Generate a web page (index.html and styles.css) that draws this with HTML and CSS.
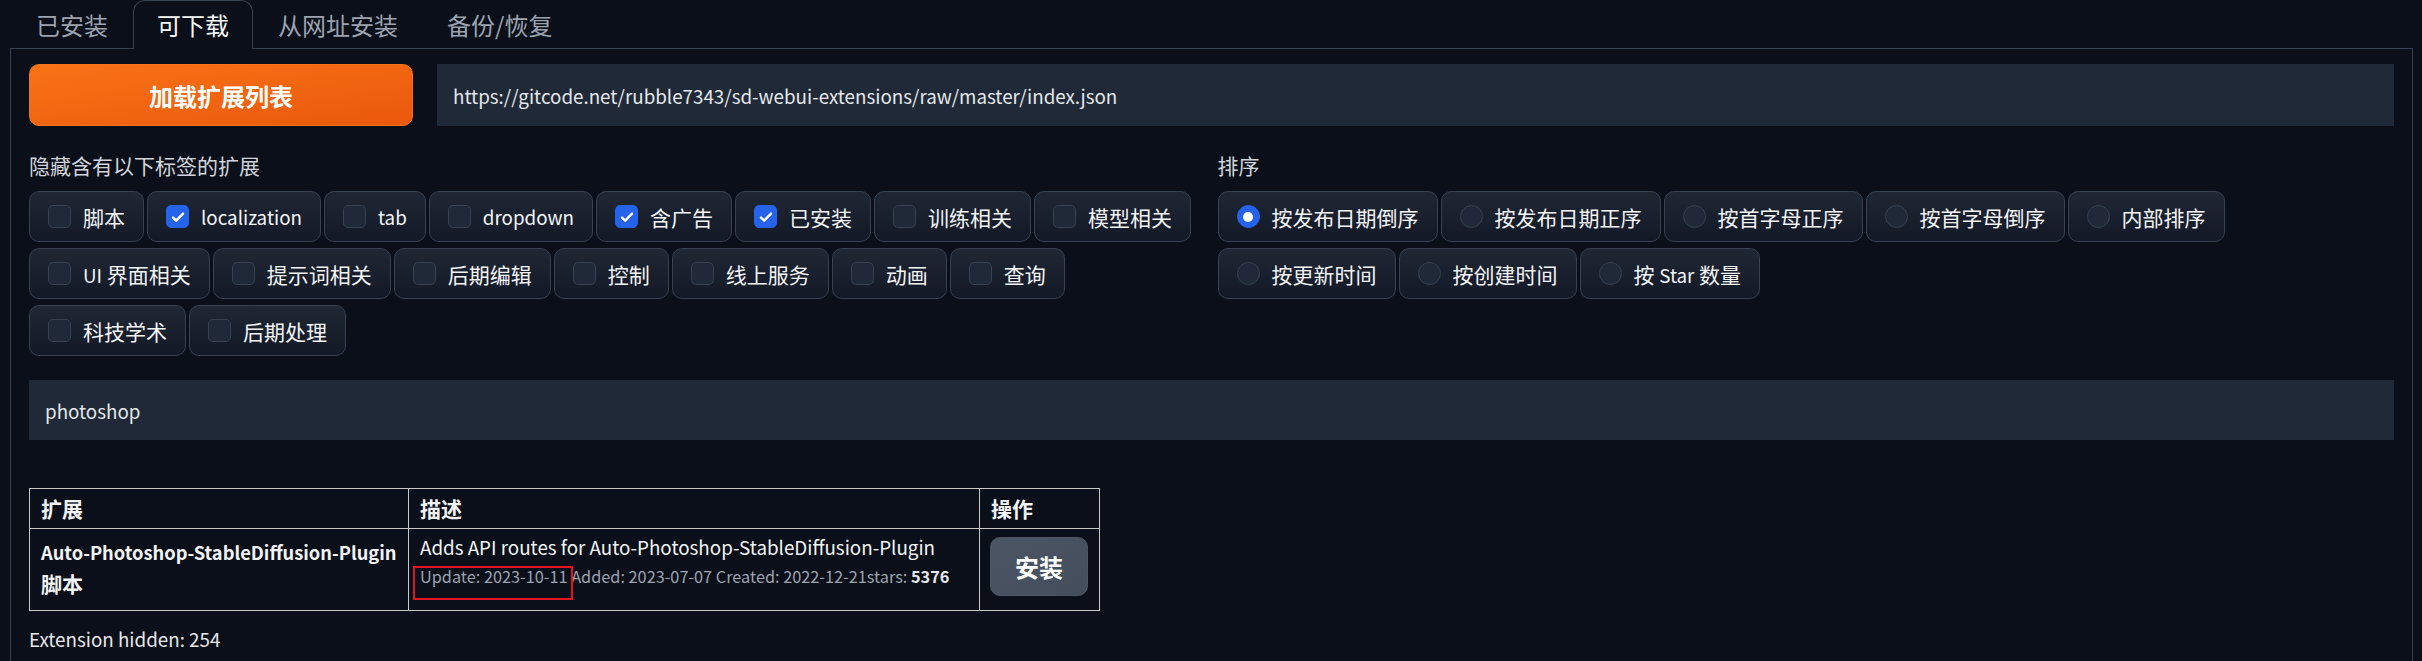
FILE: index.html
```html
<!DOCTYPE html>
<html lang="zh-CN">
<head>
  <meta charset="UTF-8">
  <title>扩展 - 可下载</title>
  <link rel="stylesheet" href="styles.css">
</head>
<body>

  <div class="tabs">
    <div class="tab-nav">
      <button class="tab">已安装</button>
      <button class="tab selected">可下载</button>
      <button class="tab">从网址安装</button>
      <button class="tab">备份/恢复</button>
    </div>

    <div class="tab-panel">
      <div class="load-row">
        <button class="btn-primary">加载扩展列表</button>
        <div class="textbox en">https://gitcode.net/rubble7343/sd-webui-extensions/raw/master/index.json</div>
      </div>

      <div class="filter-row">
        <div class="filter-col">
          <div class="group-label">隐藏含有以下标签的扩展</div>
          <div class="options">
            <label class="option"><span class="checkbox"></span>脚本</label>
            <label class="option"><span class="checkbox checked"><svg viewBox="0 0 16 16" width="16" height="16"><path d="M3 8.6l3.2 3.1L13 4.6" fill="none" stroke="#fff" stroke-width="2.4" stroke-linecap="round" stroke-linejoin="round"/></svg></span><span class="en">localization</span></label>
            <label class="option"><span class="checkbox"></span><span class="en">tab</span></label>
            <label class="option"><span class="checkbox"></span><span class="en">dropdown</span></label>
            <label class="option"><span class="checkbox checked"><svg viewBox="0 0 16 16" width="16" height="16"><path d="M3 8.6l3.2 3.1L13 4.6" fill="none" stroke="#fff" stroke-width="2.4" stroke-linecap="round" stroke-linejoin="round"/></svg></span>含广告</label>
            <label class="option"><span class="checkbox checked"><svg viewBox="0 0 16 16" width="16" height="16"><path d="M3 8.6l3.2 3.1L13 4.6" fill="none" stroke="#fff" stroke-width="2.4" stroke-linecap="round" stroke-linejoin="round"/></svg></span>已安装</label>
            <label class="option"><span class="checkbox"></span>训练相关</label>
            <label class="option"><span class="checkbox"></span>模型相关</label>
            <label class="option"><span class="checkbox"></span><span><span class="en">UI</span> 界面相关</span></label>
            <label class="option"><span class="checkbox"></span>提示词相关</label>
            <label class="option"><span class="checkbox"></span>后期编辑</label>
            <label class="option"><span class="checkbox"></span>控制</label>
            <label class="option"><span class="checkbox"></span>线上服务</label>
            <label class="option"><span class="checkbox"></span>动画</label>
            <label class="option"><span class="checkbox"></span>查询</label>
            <label class="option"><span class="checkbox"></span>科技学术</label>
            <label class="option"><span class="checkbox"></span>后期处理</label>
          </div>
        </div>

        <div class="filter-col">
          <div class="group-label">排序</div>
          <div class="options">
            <label class="option"><span class="radio checked"></span>按发布日期倒序</label>
            <label class="option"><span class="radio"></span>按发布日期正序</label>
            <label class="option"><span class="radio"></span>按首字母正序</label>
            <label class="option"><span class="radio"></span>按首字母倒序</label>
            <label class="option"><span class="radio"></span>内部排序</label>
            <label class="option"><span class="radio"></span>按更新时间</label>
            <label class="option"><span class="radio"></span>按创建时间</label>
            <label class="option"><span class="radio"></span><span>按 <span class="en">Star</span> 数量</span></label>
          </div>
        </div>
      </div>

      <div class="textbox search en">photoshop</div>

      <table class="ext-table">
        <colgroup>
          <col class="col-name">
          <col class="col-desc">
          <col class="col-action">
        </colgroup>
        <thead>
          <tr><th>扩展</th><th>描述</th><th>操作</th></tr>
        </thead>
        <tbody>
          <tr>
            <td class="ext-name">
              <strong class="en">Auto-Photoshop-StableDiffusion-Plugin</strong><br>
              <strong>脚本</strong>
            </td>
            <td class="ext-desc">
              <div><span class="en">Adds API routes for Auto-Photoshop-StableDiffusion-Plugin</span></div>
              <div class="meta"><span class="mark">Update: 2023-10-11</span> Added: 2023-07-07 Created: 2022-12-21stars: <b>5376</b></div>
            </td>
            <td class="ext-action"><button class="btn-secondary">安装</button></td>
          </tr>
        </tbody>
      </table>

      <p class="hidden-count"><span class="en">Extension hidden: 254</span></p>
    </div>
  </div>

</body>
</html>
```

FILE: styles.css
```css
* {
  box-sizing: border-box;
}

body {
  margin: 0;
  background-color: #0b0f19;
  color: #e5e7eb;
  font-family: "Noto Sans CJK SC", "Noto Sans", sans-serif;
  font-size: 21px;
}

/* latin runs: the CJK face draws latin a bit large, so step it down */
.en {
  font-size: 0.895em;
}

.tabs {
  padding: 0 9px 0 10px;
}

/* tab strip */
.tab-nav {
  display: flex;
  gap: 1px;
  height: 48px;
  padding-left: 2px;
}

.tab {
  height: 48px;
  padding: 0 23px;
  border: 1px solid transparent;
  border-bottom: none;
  border-radius: 12px 12px 0 0;
  background: transparent;
  color: #9ca3af;
  font-family: inherit;
  font-size: 24px;
  line-height: 1;
  cursor: pointer;
}

.tab.selected {
  position: relative;
  z-index: 1;
  height: 49px;
  border-color: #374151;
  background-color: #0b0f19;
  color: #f9fafb;
}

.tab-panel {
  border: 1px solid #374151;
  padding: 15px 18px;
}

/* load row */
.load-row {
  display: grid;
  grid-template-columns: 384px 1fr;
  gap: 24px;
  height: 62px;
}

.btn-primary {
  border: 1px solid #f97316;
  border-radius: 10px;
  background: linear-gradient(to bottom right, #f97316, #ea580c);
  color: #fff;
  font-family: inherit;
  font-size: 24px;
  font-weight: 700;
  cursor: pointer;
}

.textbox {
  display: flex;
  align-items: center;
  padding: 0 16px;
  background-color: #1f2937;
  color: #e5e7eb;
}

.search {
  height: 60px;
  margin-top: 24px;
}

/* tag filter + sort */
.filter-row {
  display: grid;
  grid-template-columns: 1fr 1fr;
  gap: 12px;
  margin-top: 24px;
}

.group-label {
  line-height: 30px;
  color: #d1d5db;
}

.options {
  display: flex;
  flex-wrap: wrap;
  gap: 6px 3px;
  margin-top: 11px;
}

.option {
  display: flex;
  align-items: center;
  gap: 12px;
  height: 51px;
  padding: 0 18px;
  border: 1px solid #374151;
  border-radius: 10px;
  background: linear-gradient(to top, #131927, #1f2634);
  color: #f3f4f6;
  cursor: pointer;
}

.checkbox {
  display: flex;
  align-items: center;
  justify-content: center;
  width: 23px;
  height: 23px;
  border: 1px solid #374151;
  border-radius: 5px;
  background-color: #1f2937;
}

.checkbox.checked {
  border-color: #2563eb;
  background-color: #2563eb;
}

.radio {
  display: flex;
  align-items: center;
  justify-content: center;
  width: 23px;
  height: 23px;
  border: 1px solid #374151;
  border-radius: 50%;
  background-color: #1f2937;
}

.radio.checked {
  border-color: #2563eb;
  background-color: #2563eb;
}

.radio.checked::after {
  content: "";
  width: 10px;
  height: 10px;
  border-radius: 50%;
  background-color: #fff;
}

/* results table */
.ext-table {
  width: 1070px;
  margin-top: 48px;
  border-collapse: collapse;
  table-layout: fixed;
  color: #f3f4f6;
}

.col-name { width: 379px; }
.col-desc { width: 571px; }
.col-action { width: 120px; }

.ext-table th,
.ext-table td {
  border: 1px solid #c8c8c8;
  padding: 0 11px;
  text-align: left;
  vertical-align: top;
}

.ext-table th {
  padding-top: 4px;
  padding-bottom: 4px;
  line-height: 31px;
  font-weight: 700;
}

.ext-name {
  padding-top: 7px !important;
  line-height: 31px;
  white-space: nowrap;
}

.ext-name .en {
  font-size: 18.3px;
}

.ext-desc {
  padding-top: 2px !important;
  padding-bottom: 20px !important;
  line-height: 31px;
}

.meta {
  font-size: 16.3px;
  line-height: 28px;
  color: #9ca3af;
  white-space: nowrap;
}

.meta b {
  color: #e5e7eb;
}

.mark {
  position: relative;
}

/* red highlight box drawn over the update date */
.mark::after {
  content: "";
  position: absolute;
  left: -7px;
  right: -5px;
  top: 2px;
  bottom: -12px;
  border: 2px solid #e3141e;
}

.ext-action {
  padding-top: 8px !important;
  padding-left: 10px !important;
}

.btn-secondary {
  width: 98px;
  height: 59px;
  border: 1px solid #4b5563;
  border-radius: 10px;
  background: linear-gradient(to bottom right, #4b5563, #444d5c);
  color: #fff;
  font-family: inherit;
  font-size: 24px;
  font-weight: 700;
  cursor: pointer;
}

.hidden-count {
  margin: 12px 0 0;
  line-height: 30px;
  color: #e5e7eb;
}
```
